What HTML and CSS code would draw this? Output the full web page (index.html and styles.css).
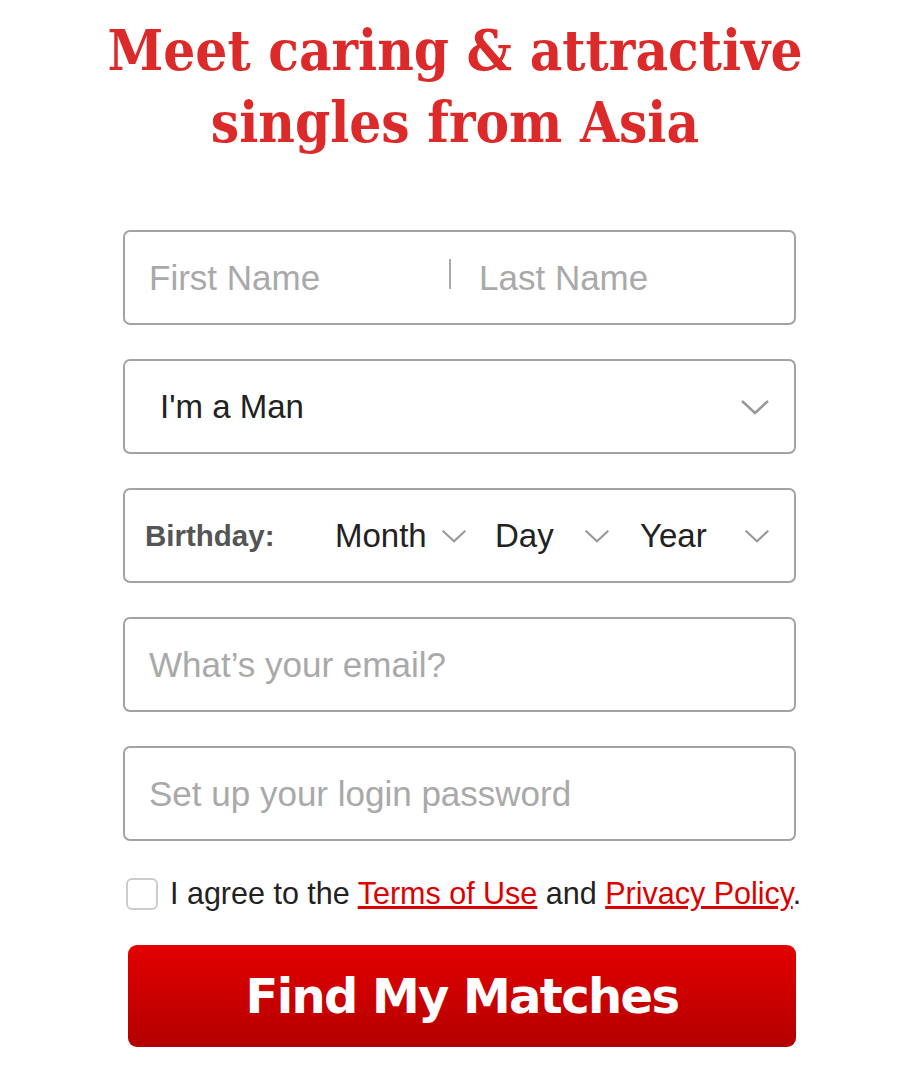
FILE: index.html
```html
<!DOCTYPE html>
<html lang="en">
<head>
  <meta charset="UTF-8">
  <title>Meet caring &amp; attractive singles from Asia</title>
  <link rel="stylesheet" href="styles.css">
</head>
<body>
  <h1 class="headline">Meet caring &amp; attractive<br>singles from Asia</h1>

  <form class="signup">
    <div class="field names">
      <input type="text" class="name" placeholder="First Name">
      <span class="divider"></span>
      <input type="text" class="name" placeholder="Last Name">
    </div>

    <div class="field select">
      <span class="value">I'm a Man</span>
      <svg class="chev" viewBox="0 0 30 16"><path d="M2 2 L15 14 L28 2"/></svg>
    </div>

    <div class="field birthday">
      <span class="bday-label">Birthday:</span>
      <span class="part month">Month <svg class="chev small" viewBox="0 0 30 16"><path d="M2 2 L15 14 L28 2"/></svg></span>
      <span class="part day">Day <svg class="chev small" viewBox="0 0 30 16"><path d="M2 2 L15 14 L28 2"/></svg></span>
      <span class="part year">Year <svg class="chev small" viewBox="0 0 30 16"><path d="M2 2 L15 14 L28 2"/></svg></span>
    </div>

    <div class="field">
      <input type="email" placeholder="What’s your email?">
    </div>

    <div class="field">
      <input type="password" placeholder="Set up your login password">
    </div>

    <label class="agree">
      <span class="box"></span>
      <span>I agree to the <a href="#">Terms of Use</a> and <a href="#">Privacy Policy</a>.</span>
    </label>

    <button type="button" class="submit">Find My Matches</button>
  </form>
</body>
</html>
```

FILE: styles.css
```css
body { margin: 0; background: #fff; font-family: "Liberation Sans", Arial, sans-serif; }
.headline { margin: 14px 0 0; padding-left: 10px; text-align: center; color: #dc2a2a; font-family: "DejaVu Serif Condensed", "DejaVu Serif", serif; font-weight: bold; font-size: 56px; line-height: 72px; }
.signup { width: 673px; margin: 72px 0 0 123px; display: flex; flex-direction: column; }
.field { height: 95px; box-sizing: border-box; border: 2px solid #a3a3a3; border-radius: 7px; display: flex; align-items: center; margin-bottom: 34px; padding: 0 24px; }
.field input { border: 0; outline: none; font: 35px "Liberation Sans", Arial, sans-serif; color: #222; width: 100%; background: transparent; padding: 0; min-width: 0; }
.field input::placeholder { color: #a9a9a9; }
.names input.name { width: 280px; flex: none; }
.divider { flex: none; width: 2px; height: 30px; background: #aaa; margin: 0 28px 8px 20px; }
.select { padding: 0 24px 0 35px; justify-content: space-between; }
.value { font-size: 33px; color: #222; }
.chev { width: 30px; height: 16px; fill: none; stroke: #999; stroke-width: 2.5; }
.chev.small { width: 26px; height: 14px; }
.birthday { padding: 0 24px 0 20px; font-size: 33px; color: #222; }
.bday-label { font-size: 29.5px; font-weight: bold; color: #555; width: 190px; flex: none; }
.part { display: flex; align-items: center; justify-content: space-between; flex: none; }
.month { width: 132px; margin-right: 28px; }
.day { width: 115px; margin-right: 30px; }
.year { flex: 1; }
.agree { display: flex; align-items: center; font-size: 30.5px; color: #222; margin: 1px 0 0 3px; white-space: nowrap; }
.box { width: 28px; height: 28px; border: 2px solid #ccc; border-radius: 6px; margin-right: 12px; flex: none; }
.agree a { color: #d00; }
.submit { margin: 34px 0 0 5px; height: 102px; border: 0; border-radius: 9px; background: linear-gradient(#e40000, #b30000); color: #fff; font-family: "DejaVu Sans", Verdana, sans-serif; font-weight: bold; font-size: 48px; letter-spacing: -1.6px; }
```
